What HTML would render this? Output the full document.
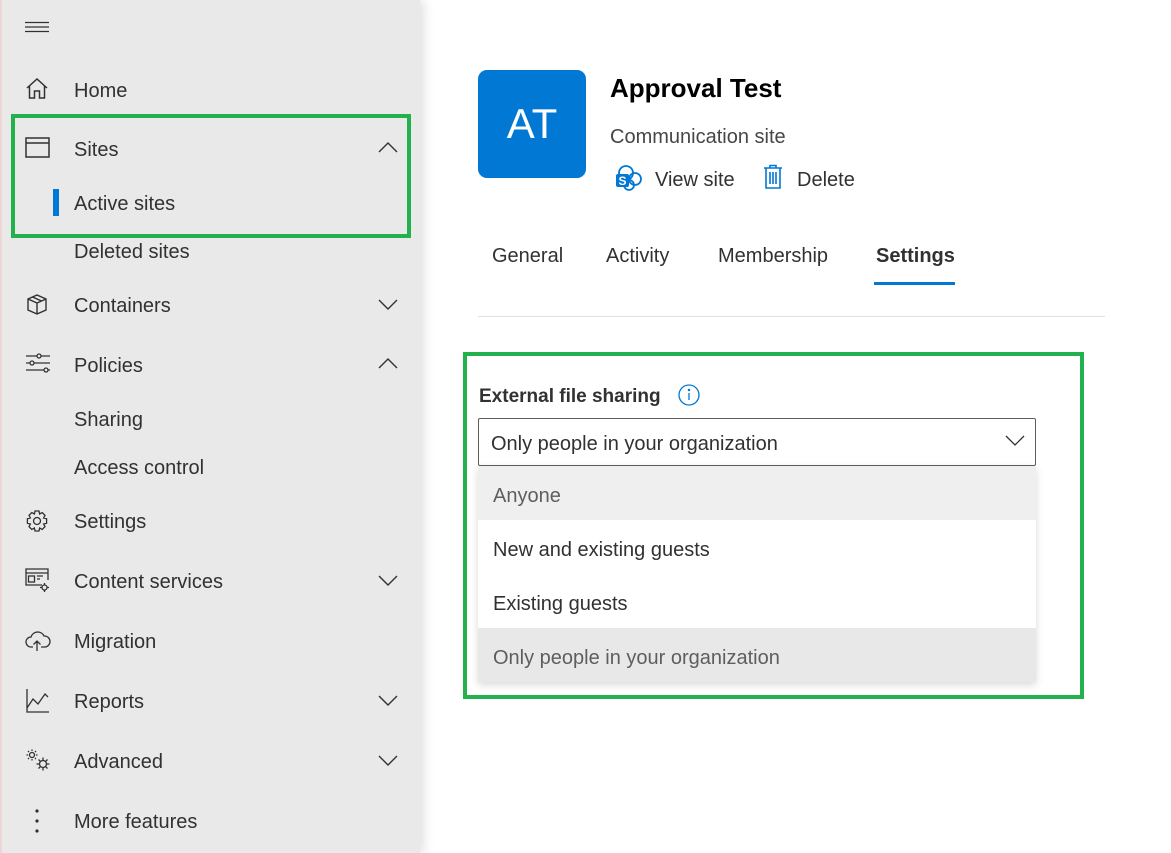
<!DOCTYPE html>
<html><head><meta charset="utf-8"><style>
*{margin:0;padding:0;box-sizing:border-box}
body{width:1171px;height:853px;position:relative;overflow:hidden;background:#fff;font-family:"Liberation Sans",sans-serif;color:#323130}
#side{position:absolute;left:0;top:0;width:420px;height:853px;background:#e9e9e9;border-left:2px solid #ecd6d6;box-shadow:4px 0 10px rgba(0,0,0,.12)}
.t{position:absolute;font-size:20px;line-height:24px;white-space:nowrap;margin-top:1px}
.ic{position:absolute;margin-left:-2px}
.chev{position:absolute;left:375px}
.green{position:absolute;border:4px solid #22b14c}
</style></head><body>
<div id="side">
<svg class="ic" style="left:24px;top:21px" width="26" height="12"><path d="M1 1.5H25M1 6H25M1 10.5H25" stroke="#323130" stroke-width="1.2"/></svg>

<svg class="ic" style="left:25px;top:77px" width="24" height="24" fill="none" stroke="#323130" stroke-width="1.5"><path d="M2 11L12 2L22 11M4.5 9V21H9.5V14H14.5V21H19.5V9"/></svg>
<div class="t" style="left:72px;top:78px">Home</div>

<svg class="ic" style="left:25px;top:137px" width="26" height="22" fill="none" stroke="#323130" stroke-width="1.5"><rect x="1" y="1" width="23" height="19"/><path d="M1 6H24"/></svg>
<div class="t" style="left:72px;top:137px">Sites</div>
<svg class="chev" style="top:140px" width="22" height="14" fill="none" stroke="#323130" stroke-width="1.4"><path d="M2 12L11 3L20 12"/></svg>
<div style="position:absolute;left:51px;top:189px;width:6px;height:27px;background:#0078d4"></div>
<div class="t" style="left:72px;top:191px">Active sites</div>
<div class="t" style="left:72px;top:239px">Deleted sites</div>

<svg class="ic" style="left:25px;top:293px" width="24" height="24" fill="none" stroke="#323130" stroke-width="1.4"><path d="M12 2L21 6V17L12 21L3 17V6Z M3 6L12 10L21 6 M12 10V21 M7.5 4L16.5 8"/></svg>
<div class="t" style="left:72px;top:293px">Containers</div>
<svg class="chev" style="top:297px" width="22" height="14" fill="none" stroke="#323130" stroke-width="1.4"><path d="M2 3L11 12L20 3"/></svg>

<svg class="ic" style="left:25px;top:351px" width="26" height="24" fill="none" stroke="#323130" stroke-width="1.3"><path d="M1 5H12M16 5H25M1 12H5M9 12H25M1 19H19M23 19H25"/><circle cx="14" cy="5" r="2"/><circle cx="7" cy="12" r="2"/><circle cx="21" cy="19" r="2"/></svg>
<div class="t" style="left:72px;top:353px">Policies</div>
<svg class="chev" style="top:356px" width="22" height="14" fill="none" stroke="#323130" stroke-width="1.4"><path d="M2 12L11 3L20 12"/></svg>
<div class="t" style="left:72px;top:407px">Sharing</div>
<div class="t" style="left:72px;top:455px">Access control</div>

<svg class="ic" style="left:25px;top:509px" width="24" height="24" fill="none" stroke="#323130" stroke-width="1.3"><circle cx="12" cy="12" r="3.5"/><path d="M10 2H14L14.6 5L17.2 3.6L20 6.4L18.6 9L21.6 9.8V14.2L18.6 15L20 17.6L17.2 20.4L14.6 19L14 22H10L9.4 19L6.8 20.4L4 17.6L5.4 15L2.4 14.2V9.8L5.4 9L4 6.4L6.8 3.6L9.4 5Z"/></svg>
<div class="t" style="left:72px;top:509px">Settings</div>

<svg class="ic" style="left:25px;top:568px" width="26" height="26" fill="none" stroke="#323130" stroke-width="1.3"><path d="M17 17H1V1H23V12M1 5H23"/><rect x="3.5" y="8" width="6" height="6"/><path d="M12 8H18M12 11H15"/><circle cx="19.5" cy="19.5" r="2.5"/><path d="M19.5 15V16.5M19.5 22.5V24M15 19.5H16.5M22.5 19.5H24"/></svg>
<div class="t" style="left:72px;top:569px">Content services</div>
<svg class="chev" style="top:573px" width="22" height="14" fill="none" stroke="#323130" stroke-width="1.4"><path d="M2 3L11 12L20 3"/></svg>

<svg class="ic" style="left:25px;top:629px" width="26" height="24" fill="none" stroke="#323130" stroke-width="1.3"><path d="M8 18H6A5 5 0 0 1 6 8A7 7 0 0 1 19 7A5.5 5.5 0 0 1 20 18H16M12 22V12M8.5 15.5L12 12L15.5 15.5"/></svg>
<div class="t" style="left:72px;top:629px">Migration</div>

<svg class="ic" style="left:25px;top:688px" width="26" height="26" fill="none" stroke="#323130" stroke-width="1.3"><path d="M2 1V24H24M2 20L8 11L13 16L20 6L23 9"/></svg>
<div class="t" style="left:72px;top:689px">Reports</div>
<svg class="chev" style="top:693px" width="22" height="14" fill="none" stroke="#323130" stroke-width="1.4"><path d="M2 3L11 12L20 3"/></svg>

<svg class="ic" style="left:25px;top:748px" width="26" height="26" fill="none" stroke="#323130" stroke-width="1.3"><circle cx="7" cy="7" r="2.5"/><path d="M7 1.5V3M7 11V12.5M1.5 7H3M11 7H12.5M3 3L4 4M10 10L11 11M11 3L10 4M3 11L4 10"/><circle cx="18" cy="16" r="3.5"/><path d="M18 9.5V12M18 20V22.5M11.5 16H14M22 16H24.5M13.5 11.5L15.3 13.3M20.7 18.7L22.5 20.5M22.5 11.5L20.7 13.3M13.5 20.5L15.3 18.7"/></svg>
<div class="t" style="left:72px;top:749px">Advanced</div>
<svg class="chev" style="top:753px" width="22" height="14" fill="none" stroke="#323130" stroke-width="1.4"><path d="M2 3L11 12L20 3"/></svg>

<svg class="ic" style="left:34px;top:808px" width="6" height="26" fill="#323130"><circle cx="3" cy="3" r="1.6"/><circle cx="3" cy="13" r="1.6"/><circle cx="3" cy="23" r="1.6"/></svg>
<div class="t" style="left:72px;top:809px">More features</div>
</div>
<div class="green" style="left:11px;top:114px;width:400px;height:124px"></div>

<div style="position:absolute;left:478px;top:70px;width:108px;height:108px;background:#0078d4;border-radius:9px;color:#fff;font-size:42px;line-height:108px;text-align:center">AT</div>
<div class="t" style="left:610px;top:72px;font-size:26px;line-height:30px;font-weight:bold;color:#000">Approval Test</div>
<div class="t" style="left:610px;top:124px;color:#484644">Communication site</div>
<svg class="ic" style="left:617px;top:164px" width="28" height="28"><circle cx="11" cy="9" r="7" fill="none" stroke="#0078d4" stroke-width="1.8"/><circle cx="20" cy="15" r="6" fill="none" stroke="#0078d4" stroke-width="1.8"/><circle cx="14" cy="21" r="5" fill="none" stroke="#0078d4" stroke-width="1.8"/><rect x="1" y="10" width="13" height="13" rx="2" fill="#0078d4"/><text x="7.5" y="21" font-size="12" font-weight="bold" fill="#fff" text-anchor="middle" font-family="Liberation Sans">S</text></svg>
<div class="t" style="left:655px;top:167px">View site</div>
<svg class="ic" style="left:765px;top:164px" width="20" height="26" fill="none" stroke="#0078d4" stroke-width="1.6"><path d="M1 4H19M7 4V1.5H13V4M3 4V24H17V4M7 8V20M10 8V20M13 8V20"/></svg>
<div class="t" style="left:797px;top:167px">Delete</div>

<div class="t" style="left:492px;top:243px">General</div>
<div class="t" style="left:606px;top:243px">Activity</div>
<div class="t" style="left:718px;top:243px">Membership</div>
<div class="t" style="left:876px;top:243px;font-weight:bold">Settings</div>
<div style="position:absolute;left:874px;top:282px;width:81px;height:3px;background:#0078d4"></div>
<div style="position:absolute;left:478px;top:316px;width:627px;height:1px;background:#e1dfdd"></div>

<div class="green" style="left:463px;top:352px;width:621px;height:347px"></div>
<div class="t" style="left:479px;top:384px;font-weight:bold;font-size:19px">External file sharing</div>
<svg class="ic" style="left:680px;top:383px" width="24" height="24" fill="none" stroke="#0078d4" stroke-width="1.3"><circle cx="11" cy="12" r="10"/><path d="M11 10V17"/><circle cx="11" cy="7" r=".6" fill="#0078d4"/></svg>
<div style="position:absolute;left:478px;top:418px;width:558px;height:48px;border:1px solid #605e5c;border-radius:2px"></div>
<div class="t" style="left:491px;top:431px">Only people in your organization</div>
<svg class="ic" style="left:1006px;top:434px" width="22" height="14" fill="none" stroke="#323130" stroke-width="1.3"><path d="M2 2L11 11L20 2"/></svg>
<div style="position:absolute;left:478px;top:466px;width:558px;height:216px;background:#fff;box-shadow:0 3px 8px rgba(0,0,0,.15)">
<div style="height:54px;background:#efefef"></div><div style="height:108px"></div><div style="height:54px;background:#e8e8e8"></div>
</div>
<div class="t" style="left:493px;top:483px;color:#605e5c">Anyone</div>
<div class="t" style="left:493px;top:537px">New and existing guests</div>
<div class="t" style="left:493px;top:591px">Existing guests</div>
<div class="t" style="left:493px;top:645px;color:#605e5c">Only people in your organization</div>
</body></html>
